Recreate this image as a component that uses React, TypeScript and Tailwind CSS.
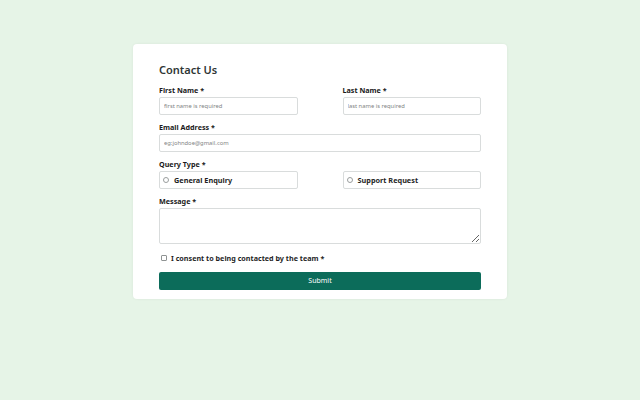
import { useState } from 'react';

const inputCls =
  'h-[18px] w-full rounded-[2px] border border-[#d9dcdc] px-[4px] text-[5.8px] text-[#333] outline-none placeholder:text-[#7f8484]';

export default function App() {
  const [query, setQuery] = useState('');
  const [consent, setConsent] = useState(false);

  return (
    <div className="min-h-screen w-full bg-[#e6f4e7] pt-[44px] font-['Noto_Sans',sans-serif]">
      <div className="mx-auto w-[374px] rounded-[4px] bg-white px-[26px] pt-[18px] pb-[9px] shadow-[0_0_3px_rgba(0,0,0,0.06)]">
        <h1 className="mb-[7px] text-[11px] leading-[16px] font-semibold text-[#2f3636]">Contact Us</h1>

        <form className="flex flex-col gap-[7px]" onSubmit={(e) => e.preventDefault()}>
          <div className="grid grid-cols-2 gap-[45px]">
            <Field label="First Name *">
              <input className={inputCls} placeholder="first name is required" />
            </Field>
            <Field label="Last Name *">
              <input className={inputCls} placeholder="last name is required" />
            </Field>
          </div>

          <Field label="Email Address *">
            <input className={inputCls} placeholder="eg:johndoe@gmail.com" />
          </Field>

          <Field label="Query Type *">
            <div className="grid grid-cols-2 gap-[45px]">
              {['General Enquiry', 'Support Request'].map((q) => (
                <label
                  key={q}
                  onClick={() => setQuery(q)}
                  className="flex h-[18px] cursor-pointer items-center gap-[5px] rounded-[2px] border border-[#d9dcdc] px-[3px]"
                >
                  <span className="flex h-[6px] w-[6px] items-center justify-center rounded-full border border-[#9a9e9e]">
                    {query === q && <span className="h-[3px] w-[3px] rounded-full bg-[#0c6c5a]" />}
                  </span>
                  <span className="text-[7.3px] leading-[10px] font-bold text-[#1f1f1f]">{q}</span>
                </label>
              ))}
            </div>
          </Field>

          <Field label="Message *">
            <textarea className="block h-[36px] w-full rounded-[2px] border border-[#d9dcdc] px-[4px] text-[7px] outline-none" />
          </Field>

          <label
            onClick={() => setConsent(!consent)}
            className="mt-[2px] flex cursor-pointer items-center gap-[4px] pl-[2px]"
          >
            <span
              className={`h-[6px] w-[6px] rounded-[1px] border border-[#8f9393] ${consent ? 'bg-[#0c6c5a]' : 'bg-white'}`}
            />
            <span className="text-[7.2px] leading-[10px] font-bold text-[#1f1f1f]">
              I consent to being contacted by the team *
            </span>
          </label>

          <button
            type="submit"
            className="mt-[2px] h-[18px] w-full rounded-[2px] bg-[#0c6c5a] text-[7px] leading-[18px] text-white"
          >
            Submit
          </button>
        </form>
      </div>
    </div>
  );
}

function Field({ label, children }: { label: string; children: React.ReactNode }) {
  return (
    <div className="flex flex-col">
      <span className="mb-[2px] text-[7.2px] leading-[10px] font-bold text-[#1a1a1a]">{label}</span>
      {children}
    </div>
  );
}
